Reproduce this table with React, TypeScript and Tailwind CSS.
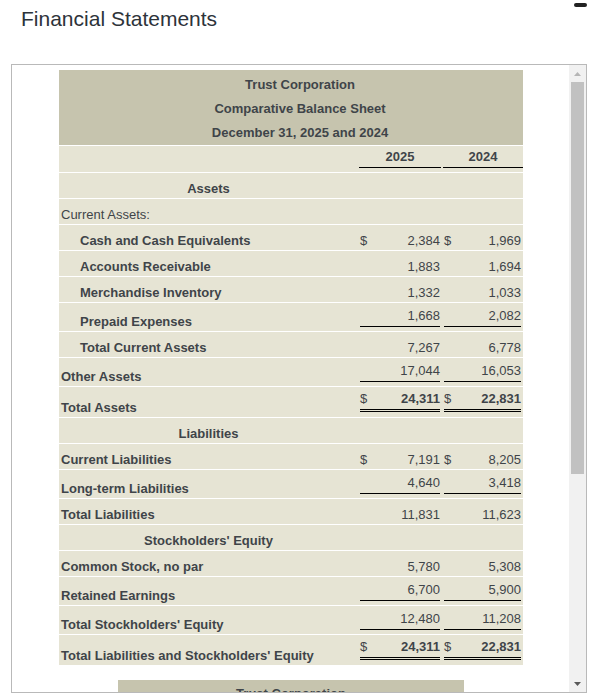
import React from 'react';

type Line = 'single' | 'double' | undefined;

type Row = {
  label: string;
  kind: 'section' | 'sub' | 'indent' | 'plain';
  a?: string;
  b?: string;
  dollar?: boolean;
  line?: Line;
  bold?: boolean;
};

const rows: Row[] = [
  { label: 'Assets', kind: 'section' },
  { label: 'Current Assets:', kind: 'sub' },
  { label: 'Cash and Cash Equivalents', kind: 'indent', a: '2,384', b: '1,969', dollar: true },
  { label: 'Accounts Receivable', kind: 'indent', a: '1,883', b: '1,694' },
  { label: 'Merchandise Inventory', kind: 'indent', a: '1,332', b: '1,033' },
  { label: 'Prepaid Expenses', kind: 'indent', a: '1,668', b: '2,082', line: 'single' },
  { label: 'Total Current Assets', kind: 'indent', a: '7,267', b: '6,778' },
  { label: 'Other Assets', kind: 'plain', a: '17,044', b: '16,053', line: 'single' },
  { label: 'Total Assets', kind: 'plain', a: '24,311', b: '22,831', dollar: true, line: 'double', bold: true },
  { label: 'Liabilities', kind: 'section' },
  { label: 'Current Liabilities', kind: 'plain', a: '7,191', b: '8,205', dollar: true },
  { label: 'Long-term Liabilities', kind: 'plain', a: '4,640', b: '3,418', line: 'single' },
  { label: 'Total Liabilities', kind: 'plain', a: '11,831', b: '11,623' },
  { label: "Stockholders' Equity", kind: 'section' },
  { label: 'Common Stock, no par', kind: 'plain', a: '5,780', b: '5,308' },
  { label: 'Retained Earnings', kind: 'plain', a: '6,700', b: '5,900', line: 'single' },
  { label: "Total Stockholders' Equity", kind: 'plain', a: '12,480', b: '11,208', line: 'single' },
  {
    label: "Total Liabilities and Stockholders' Equity",
    kind: 'plain',
    a: '24,311',
    b: '22,831',
    dollar: true,
    line: 'double',
    bold: true,
  },
];

const Amount = ({
  value,
  dollar,
  line,
  bold,
  inset,
}: {
  value?: string;
  dollar?: boolean;
  line?: Line;
  bold?: boolean;
  inset: string;
}) => {
  const box =
    line === 'double'
      ? 'pt-[4px] pb-[3px] mb-[5px] border-b-[3px] border-double border-black'
      : line === 'single'
        ? 'pt-[5px] pb-[3px] mb-[4px] border-b border-black'
        : 'pt-[8px] pb-[2px]';
  return (
    <div className={`flex justify-between leading-[15px] ${inset} ${box}`}>
      <span>{dollar ? '$' : ''}</span>
      <span className={bold ? 'font-bold' : ''}>{value}</span>
    </div>
  );
};

const labelClass = (kind: Row['kind']) => {
  if (kind === 'section') return 'text-center font-bold';
  if (kind === 'sub') return 'pl-[2px]';
  if (kind === 'indent') return 'pl-[21px] font-bold';
  return 'pl-[2px] font-bold';
};

const Scrollbar = () => (
  <div className="flex w-[17px] flex-col bg-[#f1f1f1]">
    <div className="flex h-[17px] items-center justify-center">
      <svg width="7" height="4" viewBox="0 0 7 4">
        <polygon points="0,4 3.5,0 7,4" fill="#b5b5b5" />
      </svg>
    </div>
    <div className="ml-[2px] h-[392px] w-[13px] bg-[#c1c1c1]" />
    <div className="flex-1" />
    <div className="flex h-[17px] items-center justify-center">
      <svg width="7" height="4" viewBox="0 0 7 4">
        <polygon points="0,0 7,0 3.5,4" fill="#5a5a5a" />
      </svg>
    </div>
  </div>
);

const App = () => {
  return (
    <div className="relative h-[696px] w-[595px] overflow-hidden bg-white font-['Liberation_Sans',Arial,sans-serif]">
      <div className="absolute left-[574px] top-[3px] h-[4px] w-[13px] rounded-sm bg-[#222]" />

      {/* Page title */}
      <div className="h-[64px] pl-[21px] pt-[7px] text-[21px] leading-[24px] text-[#2d333a]">
        Financial Statements
      </div>

      {/* Scrolling frame */}
      <div className="ml-[11px] flex h-[629px] w-[576px] border border-[#b9b9b9]">
        <div className="flex-1 overflow-hidden pl-[47px] pt-[5px] text-[13px] text-[#3f4449]">
          <div className="flex w-[464px] flex-col gap-px bg-white">
            <div className="bg-[#c6c4ae] pl-[18px] pt-[3px] text-center font-bold leading-[24px]">
              <div>Trust Corporation</div>
              <div>Comparative Balance Sheet</div>
              <div>December 31, 2025 and 2024</div>
            </div>

            <div className="grid grid-cols-[299px_83px_82px] items-end bg-[#e6e4d4]">
              <div />
              <div className="mb-[4px] ml-[1px] border-b border-black pb-[3px] pt-[3px] text-center font-bold leading-[15px]">
                2025
              </div>
              <div className="mb-[4px] ml-[2px] border-b border-black pb-[3px] pt-[3px] text-center font-bold leading-[15px]">
                2024
              </div>
            </div>

            {rows.map((r, i) => (
              <div key={i} className="grid grid-cols-[299px_83px_82px] items-end bg-[#e6e4d4]">
                <div className={`pb-[2px] pt-[8px] leading-[15px] ${labelClass(r.kind)}`}>{r.label}</div>
                <Amount value={r.a} dollar={r.dollar} line={r.line} bold={r.bold} inset="ml-[2px] mr-[1px]" />
                <Amount value={r.b} dollar={r.dollar} line={r.line} bold={r.bold} inset="ml-[3px] mr-[2px]" />
              </div>
            ))}
          </div>

          {/* Next statement, cut off by the frame */}
          <div className="ml-[59px] mt-[15px] w-[346px] bg-[#c6c4ae] pt-[2px] text-center font-bold leading-[24px]">
            Trust Corporation
          </div>
        </div>
        <Scrollbar />
      </div>
    </div>
  );
};

export default App;
